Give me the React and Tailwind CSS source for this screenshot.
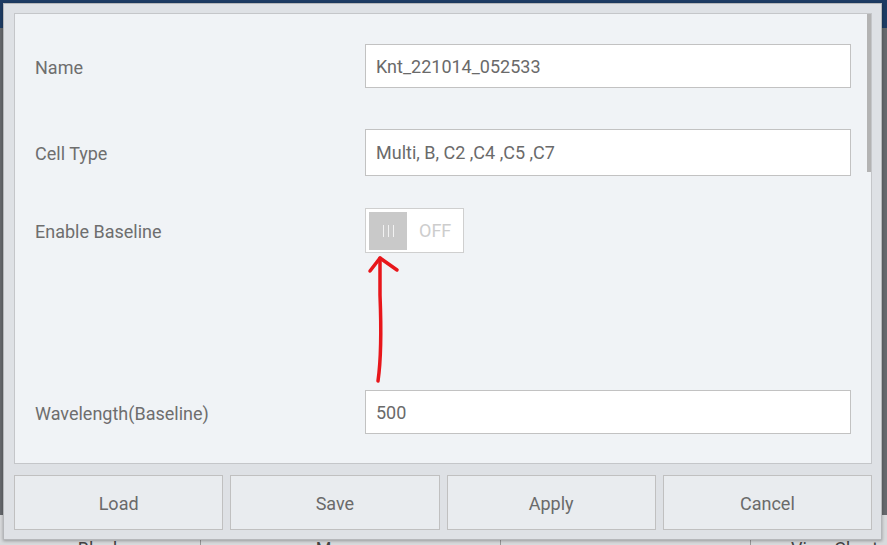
import React from 'react';

const font = { fontFamily: 'Roboto, "Liberation Sans", sans-serif' };

const Field = ({ value, h = 'h-[44px]' }) => (
  <div className={`flex w-[486px] ${h} items-center border border-[#c2c2c2] bg-white pl-[10px] text-[18px] text-[#6a6a6a]`}>
    {value}
  </div>
);

const Row = ({ label, children, className = '' }) => (
  <div className={`flex items-center ${className}`}>
    <div className="w-[330px] pt-[2px] text-[18px] text-[#6e6e6e]">{label}</div>
    {children}
  </div>
);

const Toggle = () => (
  <div className="flex h-[45px] w-[99px] items-center border border-[#cfcfcf] bg-white pl-[3px]">
    <div className="flex h-[38px] w-[38px] items-center justify-center gap-[4px] bg-[#c9c9c9]">
      <span className="h-[12px] w-px bg-[#f2f2f2]" />
      <span className="h-[12px] w-px bg-[#f2f2f2]" />
      <span className="h-[12px] w-px bg-[#f2f2f2]" />
    </div>
    <span className="ml-[12px] text-[18px] text-[#cdcdcd]">OFF</span>
  </div>
);

const Btn = ({ children }) => (
  <button className="flex h-[55px] items-center justify-center border border-[#c0c0c0] bg-[#e9ecef] pt-[2px] text-[18px] text-[#6a6a6a]">
    {children}
  </button>
);

export default function App() {
  return (
    <div className="relative flex h-[545px] w-[887px] flex-col overflow-hidden bg-[#65686c]" style={font}>
      <div className="h-[28px] bg-[#1d3b63]" />
      <div className="flex-1" />
      <div className="grid h-[30px] grid-cols-[200px_300px_250px_137px] bg-[#d8dadc] text-[18px] text-[#444]">
        <div className="pt-[20px] text-center">Blank</div>
        <div className="border-l border-[#999] pt-[20px] text-center">Measure</div>
        <div className="border-l border-[#999]" />
        <div className="border-l border-[#999] pt-[20px] pl-[40px]">View Chart</div>
      </div>

      <div className="absolute left-[3px] top-[3px] flex h-[537px] w-[879px] flex-col border border-[#b5b7ba] bg-[#dee1e5] pl-[10px] pr-[9px] pt-[9px] shadow-[0_1px_3px_rgba(0,0,0,0.3)]">
        <div className="relative h-[451px] border border-[#c4c6c9] bg-[#f0f3f6] px-[20px] pt-[30px]">
          <div className="absolute right-0 top-0 h-[158px] w-[4px] bg-[#b3b3b3]" />
          <Row label="Name">
            <Field value="Knt_221014_052533" />
          </Row>
          <Row label="Cell Type" className="mt-[41px]">
            <Field value="Multi, B, C2 ,C4 ,C5 ,C7" h="h-[47px]" />
          </Row>
          <Row label="Enable Baseline" className="mt-[32px]">
            <Toggle />
          </Row>
          <Row label="Wavelength(Baseline)" className="mt-[137px]">
            <Field value="500" />
          </Row>
        </div>
        <div className="mt-[11px] grid grid-cols-4 gap-[7px]">
          <Btn>Load</Btn>
          <Btn>Save</Btn>
          <Btn>Apply</Btn>
          <Btn>Cancel</Btn>
        </div>
      </div>

      <svg className="pointer-events-none absolute left-0 top-0" width="887" height="545">
        <path
          d="M378 381 C381 360 381 320 380 295 L380 258"
          fill="none"
          stroke="#e8161b"
          strokeWidth="3.5"
          strokeLinecap="round"
        />
        <path
          d="M370 271 L380 258 L397 270"
          fill="none"
          stroke="#e8161b"
          strokeWidth="3.5"
          strokeLinecap="round"
          strokeLinejoin="round"
        />
      </svg>
    </div>
  );
}
